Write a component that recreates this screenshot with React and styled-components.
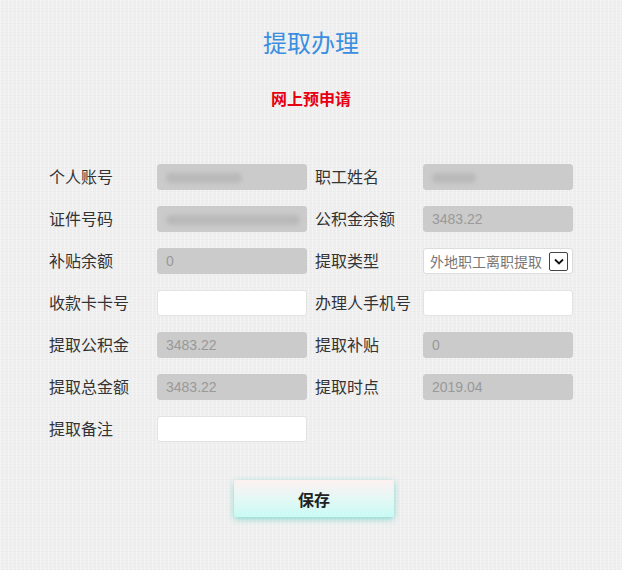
import React from 'react';
import styled, { createGlobalStyle } from 'styled-components';

const GlobalStyle = createGlobalStyle`
  html, body {
    margin: 0;
    padding: 0;
    background: #efefef;
  }
  body {
    font-family: "Noto Sans CJK SC", "Liberation Sans", sans-serif;
  }
`;

const Page = styled.div`
  width: 622px;
  min-height: 570px;
  display: flex;
  flex-direction: column;
  align-items: center;
  padding-top: 26px;
  box-sizing: border-box;
  background-color: #efefef;
  background-image:
    repeating-linear-gradient(90deg, rgba(255,255,255,0.35) 0 1px, transparent 1px 4px),
    repeating-linear-gradient(0deg, rgba(0,0,0,0.015) 0 1px, transparent 1px 3px);
`;

const Title = styled.h1`
  margin: 0;
  font-size: 24px;
  line-height: 32px;
  font-weight: 400;
  color: #3a8ee0;
`;

const SubTitle = styled.h2`
  margin: 28px 0 0;
  font-size: 16px;
  line-height: 24px;
  font-weight: 700;
  color: #e60012;
`;

const Form = styled.div`
  margin-top: 54px;
  width: 524px;
  display: grid;
  grid-template-columns: 100px 150px 100px 150px;
  column-gap: 8px;
  row-gap: 16px;
`;

const Label = styled.label`
  height: 26px;
  line-height: 25px;
  font-size: 16px;
  color: #333;
  white-space: nowrap;
`;

const Field = styled.div`
  position: relative;
  height: 26px;
  box-sizing: border-box;
  border-radius: 3px;
  padding-left: 8px;
  font-family: "Liberation Sans", Arial, sans-serif;
  font-size: 14px;
  line-height: 25px;
  color: #999;
  overflow: hidden;
  background: ${p => (p.$editable ? '#fff' : '#cbcbcb')};
  border: 1px solid ${p => (p.$editable ? '#e2e2e2' : '#cbcbcb')};
`;

/* 隐去的个人信息 */
const Masked = styled.span`
  position: absolute;
  top: 8px;
  left: 8px;
  width: ${p => p.$w}px;
  height: 10px;
  border-radius: 5px;
  background: #b9b9b9;
  filter: blur(2px);
`;

const Select = styled.div`
  height: 26px;
  box-sizing: border-box;
  border: 1px solid #dcdcdc;
  border-radius: 3px;
  background: #fff;
  display: flex;
  align-items: center;
  justify-content: space-between;
  padding: 0 4px 0 6px;
  font-size: 14px;
  color: #777;
  white-space: nowrap;
`;

const Arrow = styled.span`
  width: 19px;
  height: 19px;
  box-sizing: border-box;
  border: 1px solid #444;
  border-radius: 2px;
  display: flex;
  align-items: center;
  justify-content: center;
  background: #fff;
`;

const SaveButton = styled.button`
  margin-top: 38px;
  width: 160px;
  height: 37px;
  border: none;
  border-radius: 2px;
  background: linear-gradient(180deg, #fdf1f1 0%, #e4f8f5 50%, #c9faf4 100%);
  box-shadow: 0 2px 6px rgba(90, 205, 190, 0.7);
  font-family: "Noto Sans CJK SC", sans-serif;
  font-size: 16px;
  font-weight: 700;
  color: #222;
  cursor: pointer;
  transform: translateX(3px);
`;

const rows = [
  [['个人账号', { mask: 76 }], ['职工姓名', { mask: 44 }]],
  [['证件号码', { mask: 134 }], ['公积金余额', { value: '3483.22' }]],
  [['补贴余额', { value: '0' }], ['提取类型', { select: '外地职工离职提取' }]],
  [['收款卡卡号', { editable: true }], ['办理人手机号', { editable: true }]],
  [['提取公积金', { value: '3483.22' }], ['提取补贴', { value: '0' }]],
  [['提取总金额', { value: '3483.22' }], ['提取时点', { value: '2019.04' }]],
  [['提取备注', { editable: true }], null],
];

const renderInput = (opt) => {
  if (opt.select) {
    return (
      <Select>
        {opt.select}
        <Arrow>
          <svg width="10" height="7" viewBox="0 0 10 7">
            <path d="M1 1.5 L5 5.5 L9 1.5" fill="none" stroke="#111" strokeWidth="1.8" />
          </svg>
        </Arrow>
      </Select>
    );
  }
  return (
    <Field $editable={opt.editable}>
      {opt.mask ? <Masked $w={opt.mask} /> : opt.value}
    </Field>
  );
};

export default function App() {
  return (
    <>
      <GlobalStyle />
      <Page>
        <Title>提取办理</Title>
        <SubTitle>网上预申请</SubTitle>
        <Form>
          {rows.map((row, i) =>
            row.map((cell, j) =>
              cell ? (
                <React.Fragment key={`${i}-${j}`}>
                  <Label>{cell[0]}</Label>
                  {renderInput(cell[1])}
                </React.Fragment>
              ) : null
            )
          )}
        </Form>
        <SaveButton>保存</SaveButton>
      </Page>
    </>
  );
}
